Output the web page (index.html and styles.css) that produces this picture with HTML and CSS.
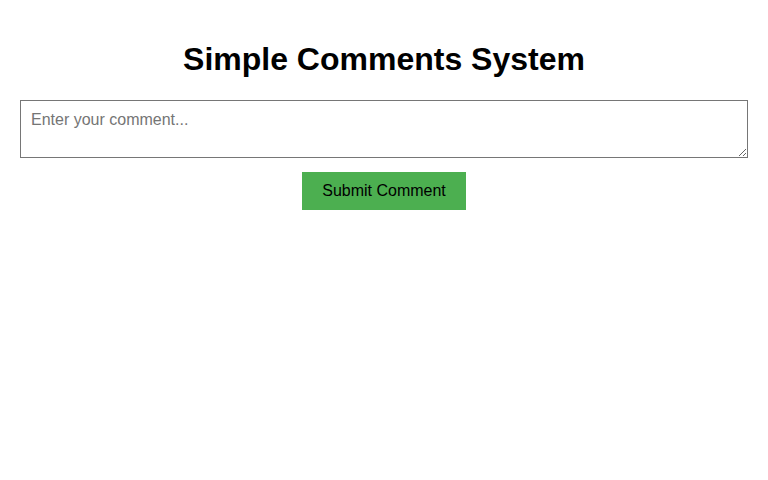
FILE: index.html
```html
<!DOCTYPE html>
<html>
<head>
<meta charset="utf-8">
<title>Simple Comments System</title>
<link rel="stylesheet" href="styles.css">
</head>
<body>
<h1 class="title">Simple Comments System</h1>
<textarea class="comment-input" rows="2" placeholder="Enter your comment..."></textarea>
<div class="actions">
  <button class="submit-btn">Submit Comment</button>
</div>
</body>
</html>
```

FILE: styles.css
```css
body {
  margin: 0;
  padding: 20px;
  font-family: "Liberation Sans", Arial, sans-serif;
  background: #ffffff;
}
.title {
  text-align: center;
  font-size: 32px;
  font-weight: bold;
  margin: 21.44px 0;
  color: #000;
}
.comment-input {
  display: block;
  width: 100%;
  box-sizing: border-box;
  height: 58px;
  padding: 10px;
  border: 1px solid #767676;
  font-family: "Liberation Sans", Arial, sans-serif;
  font-size: 16px;
  margin: 0;
}
.comment-input::placeholder {
  color: #757575;
}
.actions {
  display: flex;
  justify-content: center;
  margin-top: 14px;
}
.submit-btn {
  background: #4CAF50;
  color: #000;
  border: none;
  padding: 10px 20px;
  font-family: "Liberation Sans", Arial, sans-serif;
  font-size: 16px;
  line-height: 18px;
  cursor: pointer;
}
```
